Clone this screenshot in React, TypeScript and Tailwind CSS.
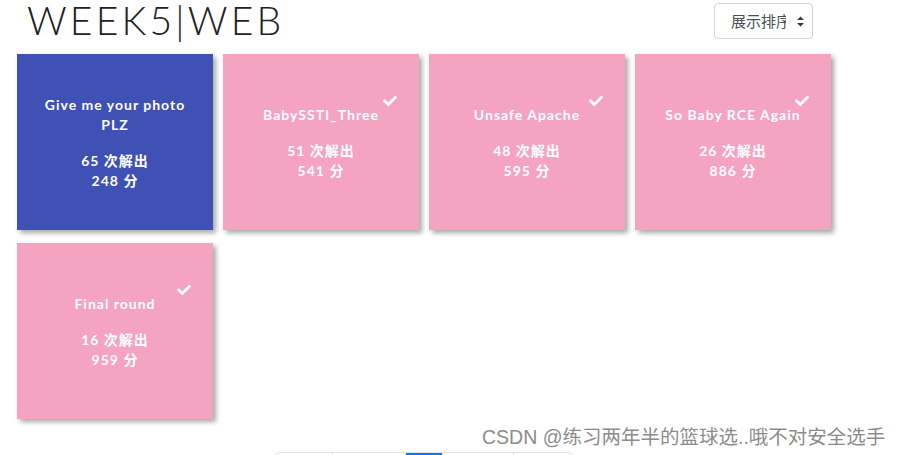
import React from "react";

type Challenge = {
  name: string;
  solves: number;
  points: number;
  solved: boolean;
};

const challenges: Challenge[] = [
  { name: "Give me your photo PLZ", solves: 65, points: 248, solved: false },
  { name: "BabySSTI_Three", solves: 51, points: 541, solved: true },
  { name: "Unsafe Apache", solves: 48, points: 595, solved: true },
  { name: "So Baby RCE Again", solves: 26, points: 886, solved: true },
  { name: "Final round", solves: 16, points: 959, solved: true },
];

function Check() {
  return (
    <svg viewBox="0 0 512 512" className="w-[14px] h-[14px] fill-white">
      <path d="M173.9 439.4l-166.4-166.4c-10-10-10-26.2 0-36.2l36.2-36.2c10-10 26.2-10 36.2 0L192 312.7 432.1 72.6c10-10 26.2-10 36.2 0l36.2 36.2c10 10 10 26.2 0 36.2L210.1 439.4c-10 10-26.2 10-36.2 0z" />
    </svg>
  );
}

function Card({ c }: { c: Challenge }) {
  return (
    <div
      className={
        "relative w-[196px] h-[176px] flex flex-col items-center justify-center text-center text-white font-bold text-[14px] leading-[20px] tracking-[1px] px-4 pt-[2px] shadow-[3px_3px_5px_rgba(0,0,0,0.35)] " +
        (c.solved ? "bg-[#f4a4c0]" : "bg-[#3f51b5]")
      }
    >
      {c.solved && (
        <div className="absolute top-[40px] right-[22px]">
          <Check />
        </div>
      )}
      <div>{c.name}</div>
      <div className="mt-[16px]">{c.solves} 次解出</div>
      <div>{c.points} 分</div>
    </div>
  );
}

export default function App() {
  return (
    <div className="relative w-[901px] h-[455px] overflow-hidden bg-white font-['Lato','Noto_Sans_CJK_SC',sans-serif]">
      <div className="flex items-start justify-between pl-[27px] pr-[88px]">
        <h1 className="text-[39px] leading-[40px] font-light tracking-[3.2px] text-[#222] font-['Lato',sans-serif]">
          WEEK5|WEB
        </h1>
        <button className="mt-[3px] w-[99px] h-[36px] border border-[#ced4da] rounded-[4px] flex items-center pl-[16px] pr-[8px] text-[15px] text-[#495057] font-['Noto_Sans_CJK_SC',sans-serif] bg-white">
          <span className="w-[55px] overflow-hidden whitespace-nowrap text-left">展示排序</span>
          <svg viewBox="0 0 10 14" className="w-[7px] h-[11px] ml-auto fill-[#343a40]">
            <path d="M5 0 L10 5 H0 Z M5 14 L0 9 H10 Z" />
          </svg>
        </button>
      </div>

      <div className="pl-[17px] pt-[14px] grid grid-cols-[repeat(4,196px)] gap-x-[10px] gap-y-[13px]">
        {challenges.map((c) => (
          <Card key={c.name} c={c} />
        ))}
      </div>

      <div className="flex justify-center pl-[17px] w-[831px] mt-[33px]">
        <div className="flex h-[38px] border border-[#dee2e6] rounded-[4px] overflow-hidden text-[15px] text-[#007bff] font-['Liberation_Sans',sans-serif]">
          <div className="w-[57px] flex items-center justify-center border-r border-[#dee2e6]">首页</div>
          <div className="w-[73px] flex items-center justify-center border-r border-[#dee2e6]">上一页</div>
          <div className="w-[36px] flex items-center justify-center bg-[#007bff] text-white">1</div>
          <div className="w-[72px] flex items-center justify-center border-l border-r border-[#dee2e6]">下一页</div>
          <div className="w-[58px] flex items-center justify-center">尾页</div>
        </div>
      </div>

      <div className="absolute left-[482px] top-[424px] text-[19.5px] leading-[26px] text-[#8c8c8c] font-['Liberation_Sans','Noto_Sans_CJK_SC',sans-serif] whitespace-nowrap">
        CSDN @练习两年半的篮球选..哦不对安全选手
      </div>
    </div>
  );
}
